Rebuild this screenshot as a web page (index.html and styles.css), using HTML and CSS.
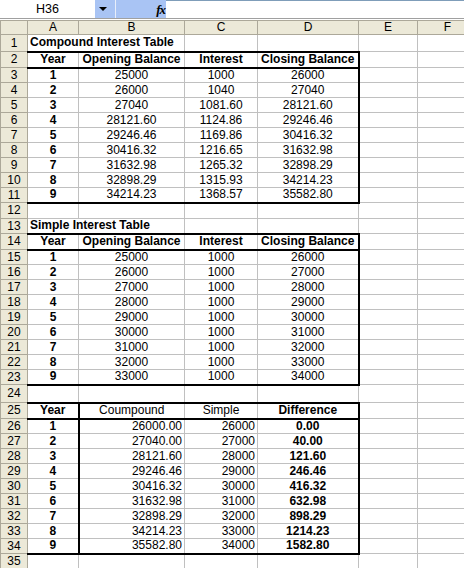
FILE: index.html
```html
<!DOCTYPE html>
<html lang="en">
<head>
    <meta charset="UTF-8">
    <title>Interest Tables</title>
    <link rel="stylesheet" href="styles.css">
</head>
<body>
    <div class="formula-bar">
        <div class="name-box">H36</div>
        <div class="name-drop"><span class="arrow"></span></div>
        <div class="fx-btn"><span class="fx">fx</span></div>
        <div class="formula-input"></div>
    </div>

    <table class="sheet">
        <colgroup>
            <col class="col-head">
            <col class="col-a">
            <col class="col-b">
            <col class="col-c">
            <col class="col-d">
            <col class="col-e">
            <col class="col-f">
        </colgroup>
        <thead>
            <tr class="letters">
                <th></th><th>A</th><th>B</th><th>C</th><th>D</th><th>E</th><th>F</th>
            </tr>
        </thead>
        <tbody>
            <!-- Compound interest -->
            <tr class="h17">
                <th>1</th><td colspan="2" class="b">Compound Interest Table</td><td></td><td></td><td></td><td></td>
            </tr>
            <tr class="h16">
                <th>2</th>
                <td class="b c bt bb">Year</td>
                <td class="b c bt bb">Opening Balance</td>
                <td class="b c bt bb">Interest</td>
                <td class="b c bt bb br">Closing Balance</td>
                <td></td><td></td>
            </tr>
            <tr><th>3</th><td class="b c">1</td><td class="c">25000</td><td class="c">1000</td><td class="c br">26000</td><td></td><td></td></tr>
            <tr><th>4</th><td class="b c">2</td><td class="c">26000</td><td class="c">1040</td><td class="c br">27040</td><td></td><td></td></tr>
            <tr><th>5</th><td class="b c">3</td><td class="c">27040</td><td class="c">1081.60</td><td class="c br">28121.60</td><td></td><td></td></tr>
            <tr><th>6</th><td class="b c">4</td><td class="c">28121.60</td><td class="c">1124.86</td><td class="c br">29246.46</td><td></td><td></td></tr>
            <tr><th>7</th><td class="b c">5</td><td class="c">29246.46</td><td class="c">1169.86</td><td class="c br">30416.32</td><td></td><td></td></tr>
            <tr><th>8</th><td class="b c">6</td><td class="c">30416.32</td><td class="c">1216.65</td><td class="c br">31632.98</td><td></td><td></td></tr>
            <tr><th>9</th><td class="b c">7</td><td class="c">31632.98</td><td class="c">1265.32</td><td class="c br">32898.29</td><td></td><td></td></tr>
            <tr><th>10</th><td class="b c">8</td><td class="c">32898.29</td><td class="c">1315.93</td><td class="c br">34214.23</td><td></td><td></td></tr>
            <tr><th>11</th><td class="b c bb">9</td><td class="c bb">34214.23</td><td class="c bb">1368.57</td><td class="c bb br">35582.80</td><td></td><td></td></tr>
            <tr class="h16"><th>12</th><td></td><td></td><td></td><td></td><td></td><td></td></tr>

            <!-- Simple interest -->
            <tr>
                <th>13</th><td colspan="2" class="b">Simple Interest Table</td><td></td><td></td><td></td><td></td>
            </tr>
            <tr class="h16">
                <th>14</th>
                <td class="b c bt bb">Year</td>
                <td class="b c bt bb">Opening Balance</td>
                <td class="b c bt bb">Interest</td>
                <td class="b c bt bb br">Closing Balance</td>
                <td></td><td></td>
            </tr>
            <tr><th>15</th><td class="b c">1</td><td class="c">25000</td><td class="c">1000</td><td class="c br">26000</td><td></td><td></td></tr>
            <tr><th>16</th><td class="b c">2</td><td class="c">26000</td><td class="c">1000</td><td class="c br">27000</td><td></td><td></td></tr>
            <tr><th>17</th><td class="b c">3</td><td class="c">27000</td><td class="c">1000</td><td class="c br">28000</td><td></td><td></td></tr>
            <tr><th>18</th><td class="b c">4</td><td class="c">28000</td><td class="c">1000</td><td class="c br">29000</td><td></td><td></td></tr>
            <tr><th>19</th><td class="b c">5</td><td class="c">29000</td><td class="c">1000</td><td class="c br">30000</td><td></td><td></td></tr>
            <tr><th>20</th><td class="b c">6</td><td class="c">30000</td><td class="c">1000</td><td class="c br">31000</td><td></td><td></td></tr>
            <tr><th>21</th><td class="b c">7</td><td class="c">31000</td><td class="c">1000</td><td class="c br">32000</td><td></td><td></td></tr>
            <tr><th>22</th><td class="b c">8</td><td class="c">32000</td><td class="c">1000</td><td class="c br">33000</td><td></td><td></td></tr>
            <tr><th>23</th><td class="b c bb">9</td><td class="c bb">33000</td><td class="c bb">1000</td><td class="c bb br">34000</td><td></td><td></td></tr>
            <tr class="h18"><th>24</th><td></td><td></td><td></td><td></td><td></td><td></td></tr>

            <!-- Comparison -->
            <tr class="h16">
                <th>25</th>
                <td class="b c bt bb br">Year</td>
                <td class="c bt bb">Coumpound</td>
                <td class="c bt bb">Simple</td>
                <td class="b c bt bb br">Difference</td>
                <td></td><td></td>
            </tr>
            <tr><th>26</th><td class="b c br">1</td><td class="r">26000.00</td><td class="r">26000</td><td class="b c br">0.00</td><td></td><td></td></tr>
            <tr><th>27</th><td class="b c br">2</td><td class="r">27040.00</td><td class="r">27000</td><td class="b c br">40.00</td><td></td><td></td></tr>
            <tr><th>28</th><td class="b c br">3</td><td class="r">28121.60</td><td class="r">28000</td><td class="b c br">121.60</td><td></td><td></td></tr>
            <tr><th>29</th><td class="b c br">4</td><td class="r">29246.46</td><td class="r">29000</td><td class="b c br">246.46</td><td></td><td></td></tr>
            <tr><th>30</th><td class="b c br">5</td><td class="r">30416.32</td><td class="r">30000</td><td class="b c br">416.32</td><td></td><td></td></tr>
            <tr><th>31</th><td class="b c br">6</td><td class="r">31632.98</td><td class="r">31000</td><td class="b c br">632.98</td><td></td><td></td></tr>
            <tr><th>32</th><td class="b c br">7</td><td class="r">32898.29</td><td class="r">32000</td><td class="b c br">898.29</td><td></td><td></td></tr>
            <tr><th>33</th><td class="b c br">8</td><td class="r">34214.23</td><td class="r">33000</td><td class="b c br">1214.23</td><td></td><td></td></tr>
            <tr><th>34</th><td class="b c br bb">9</td><td class="r bb">35582.80</td><td class="r bb">34000</td><td class="b c br bb">1582.80</td><td></td><td></td></tr>
            <tr><th>35</th><td></td><td></td><td></td><td></td><td></td><td></td></tr>
        </tbody>
    </table>
</body>
</html>
```

FILE: styles.css
```css
body {
    margin: 0;
    font-family: "Liberation Sans", Arial, sans-serif;
    background-color: #fff;
    color: #000;
    overflow: hidden;
}

/* Formula bar */
.formula-bar {
    display: flex;
    height: 18px;
    border-bottom: 1px solid #a0a0a0;
    margin-bottom: 1px;
    font-size: 12px;
}

.name-box {
    width: 95px;
    line-height: 18px;
    font-size: 12.5px;
    text-align: center;
}

.name-drop {
    width: 20px;
    background-color: #a9c4f4;
    border-right: 1px solid #e8eefa;
    display: flex;
    align-items: center;
    justify-content: center;
}

.arrow {
    border-left: 4px solid transparent;
    border-right: 4px solid transparent;
    border-top: 4px solid #000;
    margin-left: -4px;
}

.fx-btn {
    width: 50px;
    background-color: #a9c4f4;
    display: flex;
    align-items: center;
    justify-content: flex-end;
}

.fx {
    font-family: "Liberation Serif", serif;
    font-style: italic;
    font-weight: bold;
    font-size: 13px;
    line-height: 13px;
    padding-right: 1px;
    letter-spacing: -1px;
}

.formula-input {
    flex: 1;
    border-top: 1px solid #7f9db9;
}

/* Sheet grid */
.sheet {
    border-collapse: collapse;
    table-layout: fixed;
    width: 477px;
    font-size: 12px;
}

.col-head { width: 27px; }
.col-a { width: 51px; }
.col-b { width: 106px; }
.col-c { width: 73px; }
.col-d { width: 101px; }
.col-e { width: 59px; }
.col-f { width: 60px; }

.sheet tr { height: 15px; }
.sheet tr.letters { height: 14px; }
.sheet tr.h16 { height: 16px; }
.sheet tr.h17 { height: 17px; }
.sheet tr.h18 { height: 18px; }

.sheet td,
.sheet th {
    border: 1px solid #c0c0c0;
    padding: 0 2px;
    line-height: 13px;
    white-space: nowrap;
    overflow: hidden;
    vertical-align: middle;
}

.sheet th {
    background-color: #ece9d8;
    border-color: #aca899;
    font-weight: normal;
    text-align: center;
}

/* Cell formats */
.b { font-weight: bold; }
.c { text-align: center; }
.r { text-align: right; }

.sheet .bt { border-top: 2px solid #000; }
.sheet .bb { border-bottom: 2px solid #000; }
.sheet .br { border-right: 2px solid #000; }
```
